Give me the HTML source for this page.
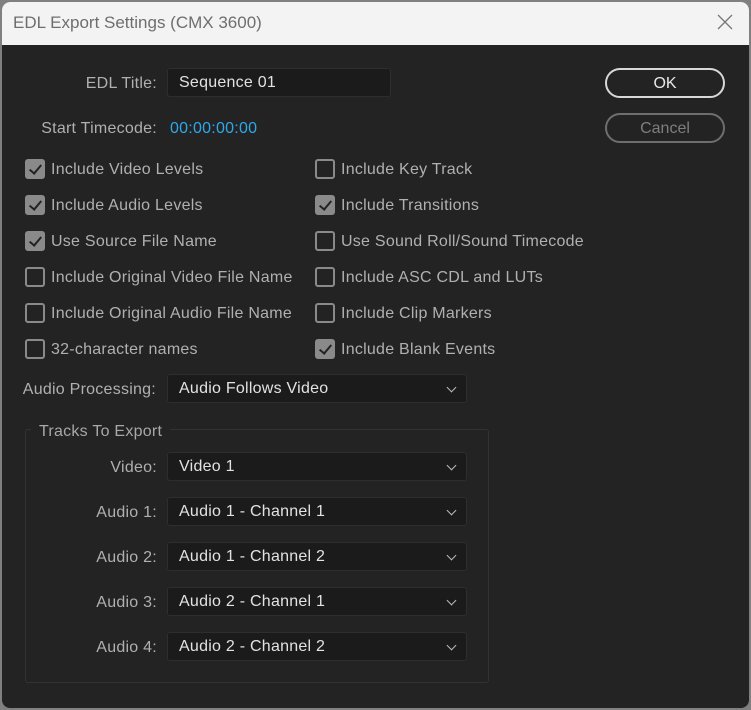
<!DOCTYPE html>
<html><head><style>
*{margin:0;padding:0;box-sizing:border-box}
body{width:751px;height:710px;background:#808080;font-family:"Liberation Sans",sans-serif;overflow:hidden;position:relative}
.win{position:absolute;left:2px;top:2px;width:747px;height:706px;background:#232323;border-radius:8px;overflow:hidden}
.title{position:absolute;left:0;top:0;width:100%;height:43px;background:#f3f3f3;color:#6e6e6e;font-size:17px;padding:11px 0 0 11px}
.x{position:absolute;right:16px;top:12px}
.a{position:absolute;font-size:16px;letter-spacing:0.25px;color:#b0b0b0;white-space:nowrap}
.lbl{text-align:right}
.f{position:absolute;background:#1b1b1b;border:1px solid #2e2e2e;border-radius:3px;color:#e2e2e2;font-size:16px;letter-spacing:0.25px;padding-left:11px;line-height:28px}
.dd::after{content:"";position:absolute;right:11px;top:9px;width:6px;height:6px;border-right:1.2px solid #bbb;border-bottom:1.2px solid #bbb;transform:rotate(45deg)}
.cb{position:absolute;width:20px;height:20px;border:2px solid #8a8a8a;border-radius:3px}
.cb.on{background:#8a8a8a}
.cb.on::after{content:"";position:absolute;left:5px;top:1px;width:5px;height:10px;border-right:2.5px solid #232323;border-bottom:2.5px solid #232323;transform:rotate(40deg)}
.btn{position:absolute;width:120px;height:30px;border-radius:15px;border:2px solid #d8d8d8;color:#e8e8e8;text-align:center;font-size:16px;line-height:27px}
</style></head><body>
<div class="win">
<div class="title">EDL Export Settings (CMX 3600)</div>
<svg class="x" width="16" height="16"><path d="M1 1L15 15M15 1L1 15" stroke="#777" stroke-width="1.3"/></svg>
</div>
<div class="a lbl" style="left:40px;width:117px;top:75px">EDL Title:</div>
<div class="f" style="left:167px;top:68px;width:224px;height:29px">Sequence 01</div>
<div class="a lbl" style="left:20px;width:137px;top:120px">Start Timecode:</div>
<div class="a" style="left:170px;top:120px;color:#2fa8ea">00:00:00:00</div>
<div class="btn" style="left:605px;top:68px">OK</div>
<div class="btn" style="left:605px;top:113px;border-color:#6e6e6e;color:#7e7e7e">Cancel</div>

<div class="cb on" style="left:25px;top:159px"></div><div class="a" style="left:51px;top:161px">Include Video Levels</div>
<div class="cb on" style="left:25px;top:195px"></div><div class="a" style="left:51px;top:197px">Include Audio Levels</div>
<div class="cb on" style="left:25px;top:231px"></div><div class="a" style="left:51px;top:233px">Use Source File Name</div>
<div class="cb" style="left:25px;top:267px"></div><div class="a" style="left:51px;top:269px">Include Original Video File Name</div>
<div class="cb" style="left:25px;top:303px"></div><div class="a" style="left:51px;top:305px">Include Original Audio File Name</div>
<div class="cb" style="left:25px;top:339px"></div><div class="a" style="left:51px;top:341px">32-character names</div>

<div class="cb" style="left:315px;top:159px"></div><div class="a" style="left:341px;top:161px">Include Key Track</div>
<div class="cb on" style="left:315px;top:195px"></div><div class="a" style="left:341px;top:197px">Include Transitions</div>
<div class="cb" style="left:315px;top:231px"></div><div class="a" style="left:341px;top:233px">Use Sound Roll/Sound Timecode</div>
<div class="cb" style="left:315px;top:267px"></div><div class="a" style="left:341px;top:269px">Include ASC CDL and LUTs</div>
<div class="cb" style="left:315px;top:303px"></div><div class="a" style="left:341px;top:305px">Include Clip Markers</div>
<div class="cb on" style="left:315px;top:339px"></div><div class="a" style="left:341px;top:341px">Include Blank Events</div>

<div class="a lbl" style="left:5px;width:151px;top:381px">Audio Processing:</div>
<div class="f dd" style="left:167px;top:374px;width:300px;height:29px">Audio Follows Video</div>

<div style="position:absolute;left:25px;top:429px;width:464px;height:254px;border:1px solid #333;border-radius:3px"></div>
<div class="a" style="left:31px;top:423px;background:#232323;padding:0 8px;color:#a8a8a8">Tracks To Export</div>

<div class="a lbl" style="left:60px;width:97px;top:459px">Video:</div>
<div class="f dd" style="left:167px;top:452px;width:300px;height:29px">Video 1</div>
<div class="a lbl" style="left:60px;width:97px;top:504px">Audio 1:</div>
<div class="f dd" style="left:167px;top:497px;width:300px;height:29px">Audio 1 - Channel 1</div>
<div class="a lbl" style="left:60px;width:97px;top:549px">Audio 2:</div>
<div class="f dd" style="left:167px;top:542px;width:300px;height:29px">Audio 1 - Channel 2</div>
<div class="a lbl" style="left:60px;width:97px;top:594px">Audio 3:</div>
<div class="f dd" style="left:167px;top:587px;width:300px;height:29px">Audio 2 - Channel 1</div>
<div class="a lbl" style="left:60px;width:97px;top:639px">Audio 4:</div>
<div class="f dd" style="left:167px;top:632px;width:300px;height:29px">Audio 2 - Channel 2</div>
</body></html>
